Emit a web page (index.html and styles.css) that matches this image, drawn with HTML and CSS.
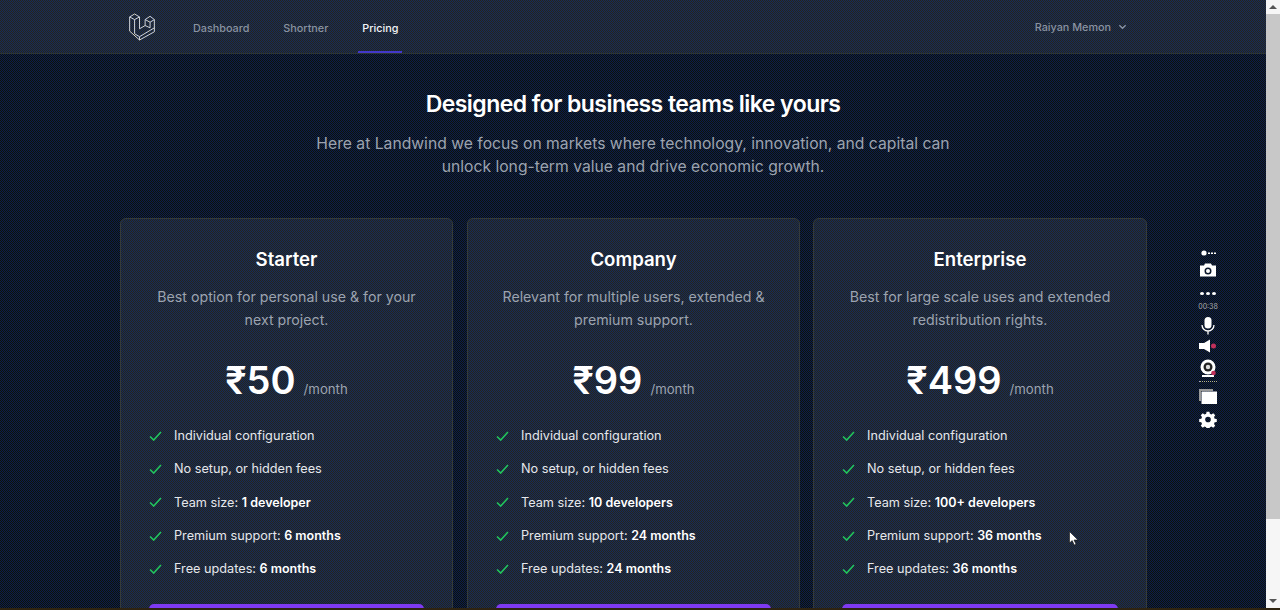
FILE: index.html
```html
<!DOCTYPE html>
<html lang="en">
<head>
    <meta charset="UTF-8">
    <meta name="viewport" content="width=device-width, initial-scale=1.0">
    <title>Pricing</title>
    <link rel="stylesheet" href="styles.css">
</head>
<body>
    <div class="window">
        <div class="page">
            <nav class="nav">
                <div class="nav-left">
                    <svg class="logo" viewBox="55 40 85 85" fill="none" stroke="currentColor" stroke-width="3" stroke-linejoin="round">
                        <path d="M60 52 75 43 90 52 75 60ZM60 52V95L90 122 135 97V60M75 60V103L90 112 135 85M90 52V88L107 78M90 112V122M107 60 122 50 135 60 122 68ZM107 60V78L122 85V68"/>
                    </svg>
                    <a class="nav-link" href="#">Dashboard</a>
                    <a class="nav-link" href="#">Shortner</a>
                    <a class="nav-link active" href="#">Pricing</a>
                </div>
                <div class="nav-user">
                    <span>Raiyan Memon</span>
                    <svg class="chevron" viewBox="0 0 10 6" fill="none" stroke="currentColor" stroke-width="1.5"><path d="M1.5 1 5 4.5 8.5 1"/></svg>
                </div>
            </nav>

            <section class="pricing">
                <h1>Designed for business teams like yours</h1>
                <p class="lead">Here at Landwind we focus on markets where technology, innovation, and capital can unlock long-term value and drive economic growth.</p>

                <div class="cards">
                    <div class="card">
                        <h2>Starter</h2>
                        <p class="desc">Best option for personal use &amp; for your next project.</p>
                        <div class="price"><span class="amount">₹50</span><span class="per">/month</span></div>
                        <ul class="features">
                            <li><svg class="check" viewBox="0 0 14 11"><path d="M1 6l4 4 8-9"/></svg><span>Individual configuration</span></li>
                            <li><svg class="check" viewBox="0 0 14 11"><path d="M1 6l4 4 8-9"/></svg><span>No setup, or hidden fees</span></li>
                            <li><svg class="check" viewBox="0 0 14 11"><path d="M1 6l4 4 8-9"/></svg><span>Team size: <b>1 developer</b></span></li>
                            <li><svg class="check" viewBox="0 0 14 11"><path d="M1 6l4 4 8-9"/></svg><span>Premium support: <b>6 months</b></span></li>
                            <li><svg class="check" viewBox="0 0 14 11"><path d="M1 6l4 4 8-9"/></svg><span>Free updates: <b>6 months</b></span></li>
                        </ul>
                        <div class="btn"></div>
                    </div>
                    <div class="card">
                        <h2>Company</h2>
                        <p class="desc">Relevant for multiple users, extended &amp; premium support.</p>
                        <div class="price"><span class="amount">₹99</span><span class="per">/month</span></div>
                        <ul class="features">
                            <li><svg class="check" viewBox="0 0 14 11"><path d="M1 6l4 4 8-9"/></svg><span>Individual configuration</span></li>
                            <li><svg class="check" viewBox="0 0 14 11"><path d="M1 6l4 4 8-9"/></svg><span>No setup, or hidden fees</span></li>
                            <li><svg class="check" viewBox="0 0 14 11"><path d="M1 6l4 4 8-9"/></svg><span>Team size: <b>10 developers</b></span></li>
                            <li><svg class="check" viewBox="0 0 14 11"><path d="M1 6l4 4 8-9"/></svg><span>Premium support: <b>24 months</b></span></li>
                            <li><svg class="check" viewBox="0 0 14 11"><path d="M1 6l4 4 8-9"/></svg><span>Free updates: <b>24 months</b></span></li>
                        </ul>
                        <div class="btn"></div>
                    </div>
                    <div class="card">
                        <h2>Enterprise</h2>
                        <p class="desc">Best for large scale uses and extended redistribution rights.</p>
                        <div class="price"><span class="amount">₹499</span><span class="per">/month</span></div>
                        <ul class="features">
                            <li><svg class="check" viewBox="0 0 14 11"><path d="M1 6l4 4 8-9"/></svg><span>Individual configuration</span></li>
                            <li><svg class="check" viewBox="0 0 14 11"><path d="M1 6l4 4 8-9"/></svg><span>No setup, or hidden fees</span></li>
                            <li><svg class="check" viewBox="0 0 14 11"><path d="M1 6l4 4 8-9"/></svg><span>Team size: <b>100+ developers</b></span></li>
                            <li><svg class="check" viewBox="0 0 14 11"><path d="M1 6l4 4 8-9"/></svg><span>Premium support: <b>36 months</b></span></li>
                            <li><svg class="check" viewBox="0 0 14 11"><path d="M1 6l4 4 8-9"/></svg><span>Free updates: <b>36 months</b></span></li>
                        </ul>
                        <div class="btn"></div>
                    </div>
                </div>
            </section>
        </div>

        <div class="scrollbar">
            <div class="arrow up"></div>
            <div class="track"><div class="thumb"></div></div>
            <div class="arrow down"></div>
        </div>
    </div>
    <div class="strip"></div>

    <!-- screen recorder toolbar, floats over the page -->
    <div class="recorder">
        <svg class="rec-top" viewBox="0 0 18 6" fill="#fff"><circle cx="5" cy="3" r="2.6"/><rect x="9" y="2.5" width="2" height="1.5"/><rect x="12" y="2.5" width="2" height="1.5"/><rect x="15" y="2.5" width="2" height="1.5"/></svg>
        <svg class="rec-icon" viewBox="0 0 18 14"><path fill="#fff" fill-rule="evenodd" d="M1 2.500H5L6 .5H12L13 2.500H17V13.500H1ZM9 4.500A3.500 3.500 0 1 0 9 11.500 3.500 3.500 0 0 0 9 4.500Z"/><circle cx="9" cy="8" r="2" fill="#fff"/></svg>
        <div class="rec-dots"><i></i><i></i><i></i></div>
        <div class="rec-time">00:38</div>
        <svg class="rec-icon mic" viewBox="0 0 14 18"><rect x="3.500" y="0" width="7" height="11.500" rx="3.500" fill="#fff"/><path d="M1 8a6 6 0 0 0 12 0M7 14V17.500" stroke="#fff" stroke-width="1.300" fill="none"/></svg>
        <svg class="rec-icon speaker" viewBox="0 0 18 14"><path fill="#fff" d="M0 4H5L11 .5V13.500L5 10H0Z"/><circle cx="14.500" cy="7" r="2.500" fill="#c2305a"/></svg>
        <svg class="rec-icon cam" viewBox="0 0 18 20"><circle cx="9" cy="8" r="7.500" fill="#fff"/><circle cx="9" cy="8" r="4.500" fill="#222"/><circle cx="9" cy="8" r="2.200" fill="#ddd"/><path fill="#fff" d="M3 16H15V18H3Z"/><circle cx="14.500" cy="14" r="2.300" fill="#c2305a"/></svg>
        <div class="rec-line"></div>
        <svg class="rec-icon windows" viewBox="0 0 18 15"><path fill="#999" d="M0 0H14V2H0ZM0 2H2V12H0Z"/><path fill="#fff" d="M2.500 2.500H18V15H2.500Z"/></svg>
        <svg class="rec-icon gear" viewBox="0 0 24 24"><path fill="#fff" fill-rule="evenodd" d="M10 1h4l.6 3 2.200.9 2.600-1.700 2.800 2.800-1.700 2.600.9 2.200 3 .6v4l-3 .6-.9 2.200 1.700 2.600-2.800 2.800-2.600-1.700-2.200.9-.6 3h-4l-.6-3-2.200-.9-2.600 1.700-2.800-2.800 1.700-2.600-.9-2.200-3-.6v-4l3-.6.9-2.200-1.700-2.600 2.800-2.800 2.600 1.700 2.200-.9zM12 8a4 4 0 1 0 0 8 4 4 0 0 0 0-8z"/></svg>
    </div>

    <svg class="cursor" viewBox="0 0 10 15"><path d="M.5.5V12L3.200 9.600 5.200 14 7 13.200 5 9H9Z" fill="#fff" stroke="#111" stroke-width=".6"/></svg>
</body>
</html>
```

FILE: styles.css
```css
* {
    box-sizing: border-box;
}
html, body {
    margin: 0;
    height: 100%;
    overflow: hidden;
}
body {
    font-family: Inter, 'Noto Sans', sans-serif;
    background-color: #111827;
    color: #fff;
}
.window {
    display: flex;
    height: 608px;
}
/* the recording is a gif, so flat colours come out as a two colour checker.
   fixed attachment keeps the checker in step across the bar and the cards */
.page {
    flex: 1;
    min-width: 0;
    overflow: hidden;
    background-image: conic-gradient(#0c1a50 25%, #0d1508 0 50%, #0c1a50 0 75%, #0d1508 0);
    background-size: 2px 2px;
    background-attachment: fixed;
}
.nav, .card {
    background-image: conic-gradient(#152a5c 25%, #262618 0 50%, #152a5c 0 75%, #262618 0);
    background-size: 2px 2px;
    background-attachment: fixed;
}
.strip {
    height: 2px;
    background-color: #2e2310;
}
a {
    color: inherit;
    text-decoration: none;
}

/* top bar */
.nav {
    height: 54px;
    padding: 0 139px 0 129px;
    display: flex;
    justify-content: space-between;
    align-items: center;
    border-bottom: 1px solid #2c3434;
}
.nav-left {
    display: flex;
    align-items: center;
    height: 100%;
}
.logo {
    width: 28px;
    height: 28px;
    margin-right: 33px;
    margin-left: -1px;
    color: #d1d5db;
}
.nav-link {
    height: 100%;
    display: flex;
    align-items: center;
    padding: 5px 4px 0;
    margin-right: 26px;
    font-size: 10.8px;
    font-weight: 500;
    color: #8a93a0;
    border-bottom: 2px solid transparent;
}
.nav-link.active {
    color: #f3f4f6;
    border-bottom-color: #4338ca;
}
.nav-user {
    display: flex;
    align-items: center;
    gap: 7px;
    padding-top: 1px;
    font-size: 10.8px;
    font-weight: 500;
    color: #8a93a0;
}
.chevron {
    width: 9px;
    height: 6px;
}

/* pricing */
.pricing {
    padding: 35px 120px 0;
}
h1 {
    margin: 0;
    text-align: center;
    font-size: 23px;
    line-height: 30px;
    font-weight: 600;
    letter-spacing: -0.54px;
}
.lead {
    width: 660px;
    margin: 13px auto 0;
    text-align: center;
    font-size: 15.7px;
    line-height: 23px;
    color: #9ca3af;
}
/* whole pixel columns, a fractional card would put its checker out of step */
.cards {
    display: grid;
    grid-template-columns: repeat(3, 333px);
    column-gap: 14px;
    margin-top: 40px;
}
.card {
    height: 420px;
    padding: 26px 28px;
    border: 1px solid #343a3a;
    border-radius: 6px;
    text-align: center;
}
.card:last-child {
    margin-left: -1px;
}
h2 {
    margin: 0;
    font-size: 18.6px;
    line-height: 28px;
    font-weight: 600;
}
.desc {
    margin: 12px 0 0;
    font-size: 14.2px;
    line-height: 23px;
    color: #9ca3af;
}
.price {
    display: flex;
    justify-content: center;
    align-items: baseline;
    margin-top: 19px;
}
.amount {
    font-size: 38px;
    line-height: 60px;
    font-weight: 600;
    margin-right: 8px;
}
.per {
    font-size: 13.2px;
    color: #9ca3af;
}
.features {
    list-style: none;
    margin: 9px 0 0;
    padding: 0;
    text-align: left;
}
.features li {
    display: flex;
    align-items: center;
    gap: 12px;
    height: 33.3px;
    font-size: 12.7px;
    color: #e5e7eb;
}
.features b {
    font-size: 12.5px;
    font-weight: 600;
    color: #fff;
}
.check {
    width: 13px;
    height: 10px;
    fill: none;
    stroke: #22c55e;
    stroke-width: 1.7;
}
.btn {
    margin-top: 19px;
    height: 40px;
    border-radius: 5px;
    background-color: #7e3af2;
}

/* browser scrollbar */
.scrollbar {
    width: 14px;
    display: flex;
    flex-direction: column;
    background-color: #f6f6f6;
}
.arrow {
    height: 14px;
    display: flex;
    align-items: center;
    justify-content: center;
}
.arrow::before {
    content: "";
    border-left: 4px solid transparent;
    border-right: 4px solid transparent;
}
.arrow.up::before {
    border-bottom: 4px solid #555;
}
.arrow.down::before {
    border-top: 4px solid #555;
}
.track {
    flex: 1;
}
.thumb {
    height: 505px;
    background-color: #c8c8c8;
}

/* recorder toolbar */
.recorder {
    position: absolute;
    left: 1199px;
    top: 250px;
    width: 18px;
    display: flex;
    flex-direction: column;
    align-items: center;
}
.rec-top {
    width: 18px;
    height: 6px;
}
.rec-icon {
    display: block;
    width: 18px;
    height: 14px;
    margin-top: 7px;
}
.rec-dots {
    display: flex;
    gap: 2px;
    margin-top: 15px;
}
.rec-dots i {
    width: 4px;
    height: 3px;
    border-radius: 50%;
    background-color: #fff;
}
.rec-time {
    font-size: 7px;
    line-height: 9px;
    margin-top: 7px;
    color: #aaa;
}
.mic {
    height: 18px;
    margin-top: 6px;
}
.speaker {
    margin-top: 4px;
}
.cam {
    height: 20px;
    margin-top: 6px;
}
.rec-line {
    width: 18px;
    height: 1px;
    margin-top: 2px;
    border-top: 1px dotted #aaa;
}
.windows {
    height: 15px;
    margin-top: 7px;
}
.gear {
    height: 17px;
    margin-top: 7px;
}

/* mouse pointer caught by the recording */
.cursor {
    position: absolute;
    left: 1069px;
    top: 531px;
    width: 10px;
    height: 15px;
}
```
